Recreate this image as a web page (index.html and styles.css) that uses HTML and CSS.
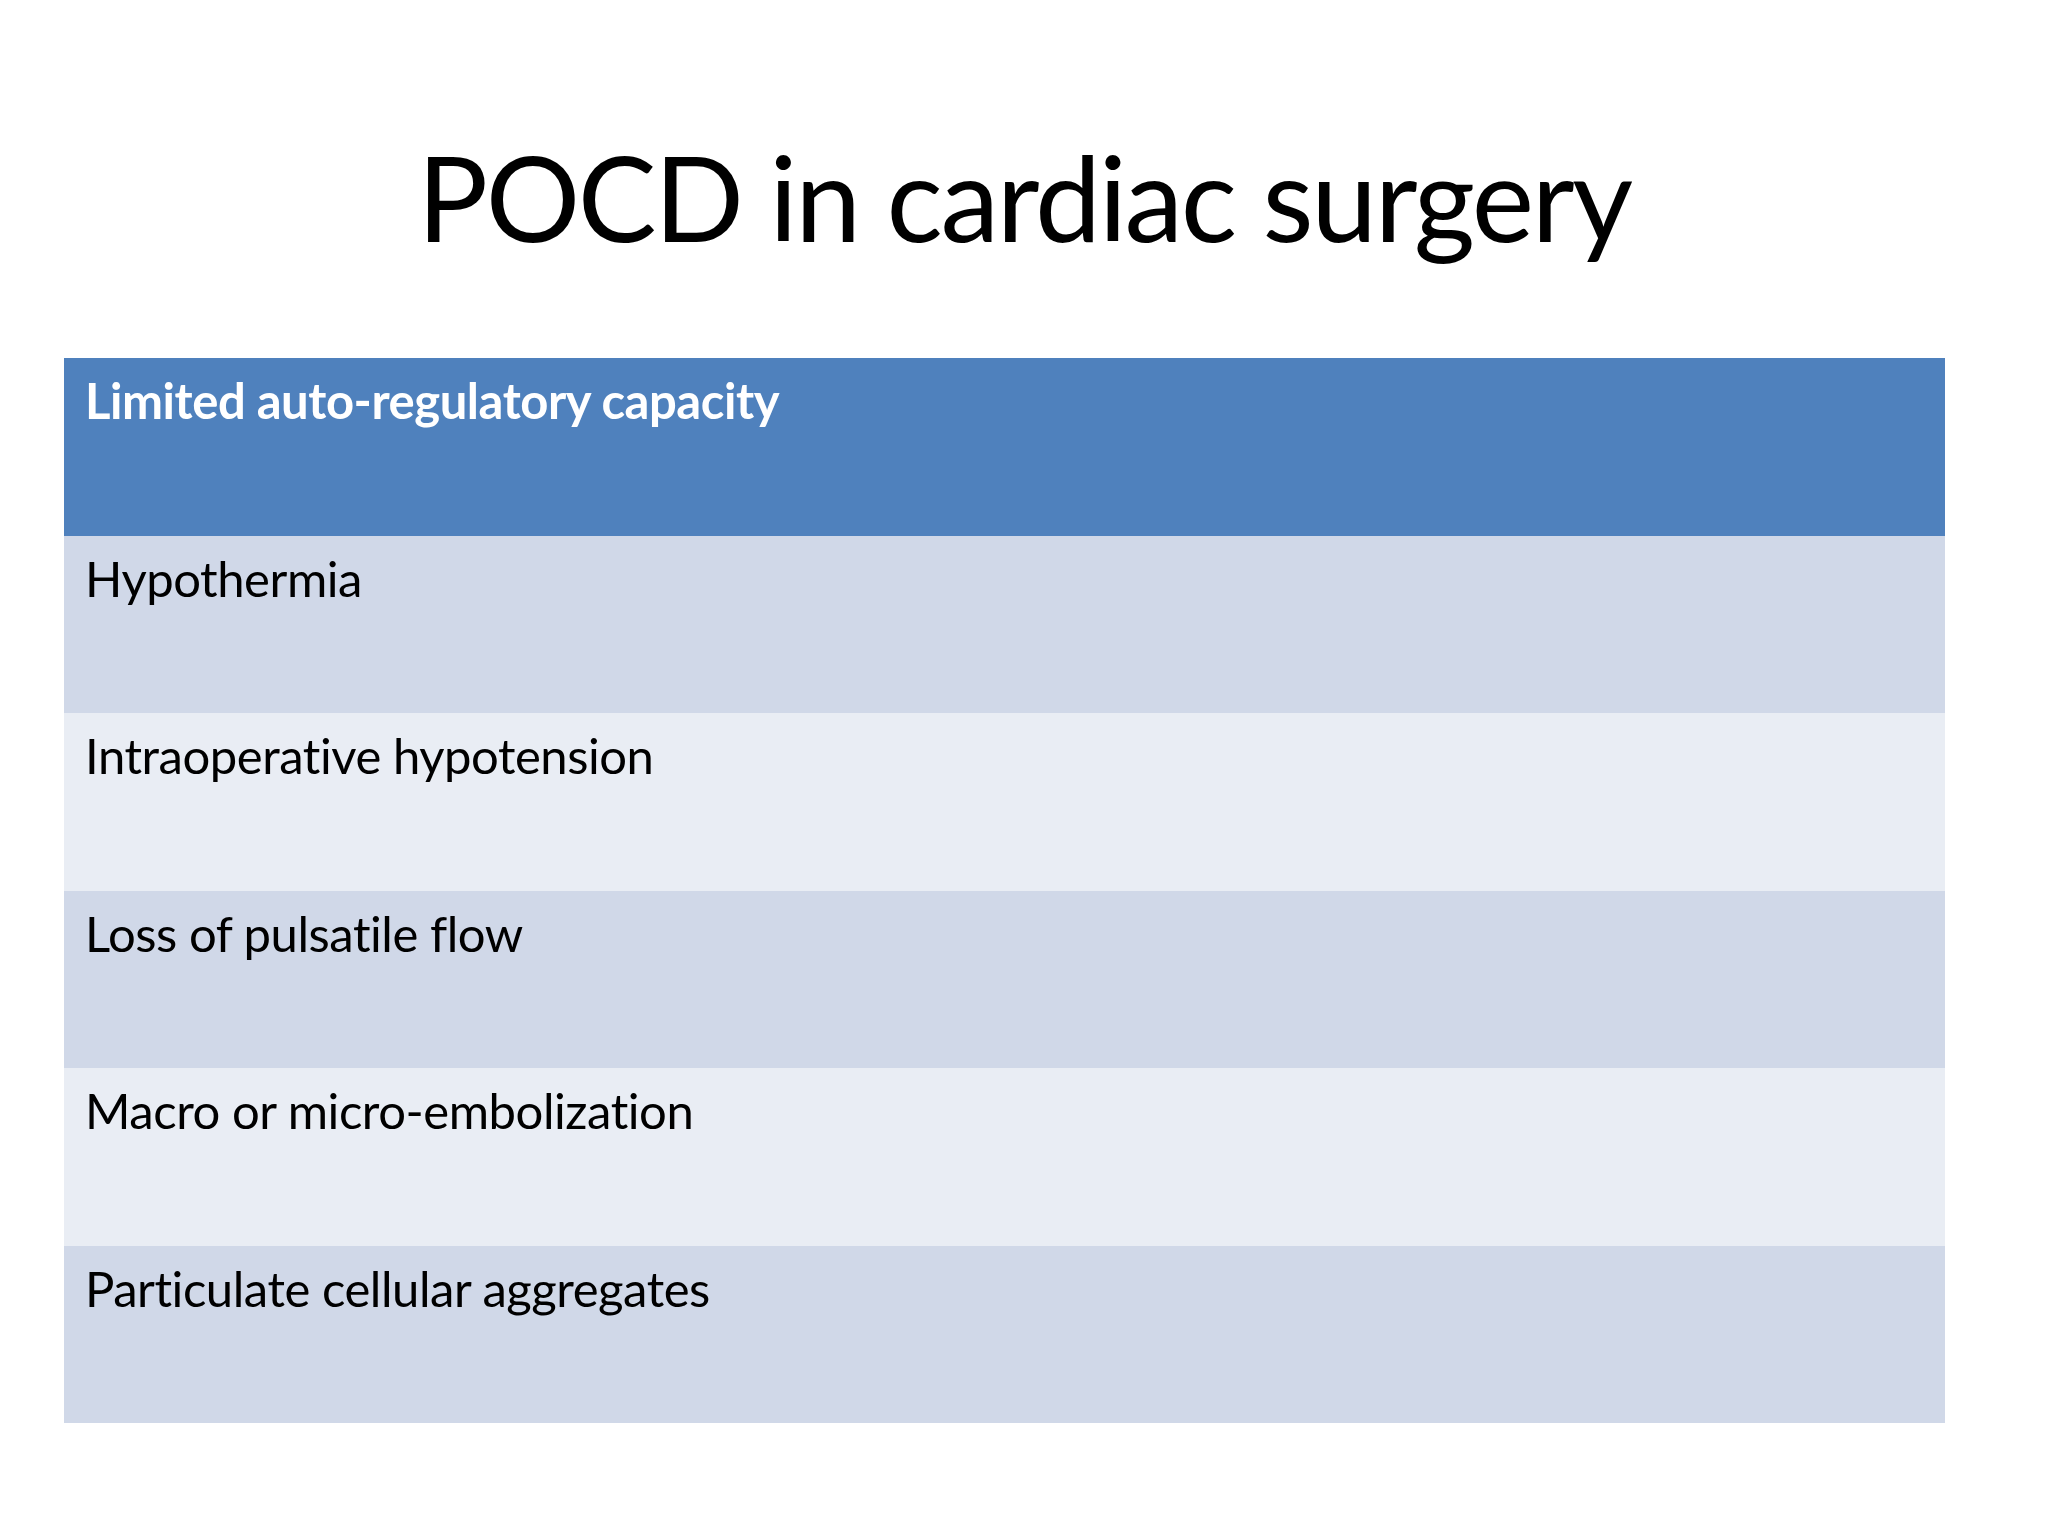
FILE: index.html
```html
<!DOCTYPE html>
<html>
<head>
<meta charset="utf-8">
<title>POCD in cardiac surgery</title>
<link rel="stylesheet" href="styles.css">
</head>
<body>
<div class="slide">
  <h1 class="title">POCD in cardiac surgery</h1>
  <div class="table">
    <div class="row head">Limited auto-regulatory capacity</div>
    <div class="row odd">Hypothermia</div>
    <div class="row even">Intraoperative hypotension</div>
    <div class="row odd">Loss of pulsatile flow</div>
    <div class="row even">Macro or micro-embolization</div>
    <div class="row odd">Particulate cellular aggregates</div>
  </div>
</div>
</body>
</html>
```
FILE: styles.css
```css
html, body {
  margin: 0;
  padding: 0;
  background: #ffffff;
}
.slide {
  width: 2048px;
  height: 1536px;
  display: flex;
  flex-direction: column;
  font-family: Lato, "Open Sans", sans-serif;
  color: #000;
}
.title {
  margin: 126px 0 0 0;
  font-weight: 400;
  font-size: 118px;
  line-height: 1.2;
  text-align: center;
  letter-spacing: -2.4px;
  height: 232px;
}
.table {
  margin-left: 64px;
  width: 1881px;
  display: flex;
  flex-direction: column;
}
.row {
  height: 177.5px;
  box-sizing: border-box;
  padding: 13px 21px 0;
  font-size: 49px;
  line-height: 1.2;
  letter-spacing: -0.45px;
}
.head {
  background: #4f81bd;
  color: #ffffff;
  font-weight: 700;
}
.odd { background: #d0d8e8; }
.even { background: #e9edf4; }
```
